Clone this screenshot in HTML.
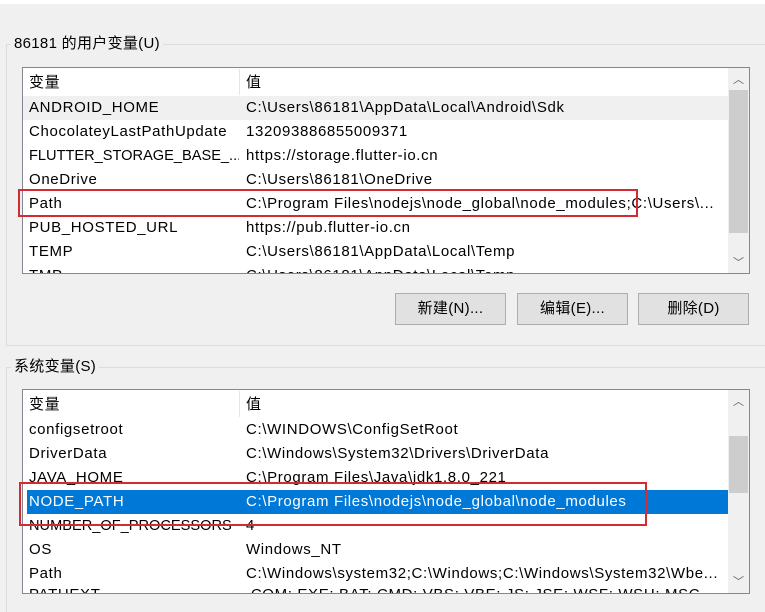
<!DOCTYPE html>
<html><head><meta charset="utf-8"><style>
*{margin:0;padding:0;box-sizing:border-box}
html,body{width:765px;height:612px;overflow:hidden}
body{background:#f0f0f0;position:relative;font-family:"Liberation Sans","Noto Sans CJK SC",sans-serif;font-size:15px;letter-spacing:0.65px;color:#000}
.abs{position:absolute}
.grp{position:absolute;border:1px solid #dcdcdc;border-right:none}
.lbl{position:absolute;background:#f0f0f0;padding:0 3px;line-height:18px;letter-spacing:0.3px}
.list{position:absolute;background:#fff;border:1px solid #828790;overflow:hidden}
.row{position:absolute;left:0;height:24px;line-height:24px;width:705px;white-space:nowrap;overflow:hidden}
.row span{position:absolute}
.c1{left:6px;width:210px;overflow:hidden}.c2{left:223px}
.sb{position:absolute;right:0;top:0;bottom:0;width:21px;background:#f0f0f0}
.thumb{position:absolute;left:1px;width:19px;background:#cdcdcd}
.arr{position:absolute;left:0;width:21px;text-align:center;font-size:11px;color:#606060;letter-spacing:0}
.btn{position:absolute;height:32px;top:293px;background:#e1e1e1;border:1px solid #adadad;text-align:center;line-height:30px;letter-spacing:0.3px}
.red{position:absolute;border:2px solid #d42a32}
</style></head><body>
<div class="abs" style="left:0;top:0;width:765px;height:4px;background:#fff"></div>
<div class="grp" style="left:6px;top:44px;width:770px;height:302px"></div>
<div class="lbl" style="left:11px;top:35px">86181 的用户变量(U)</div>
<div class="list" style="left:22px;top:67px;width:728px;height:207px">
 <div class="row" style="top:1px;height:28px;line-height:28px"><span class="c1">变量</span><span class="c2">值</span></div>
 <div class="abs" style="left:216px;top:1px;width:1px;height:26px;background:#e5e5e5"></div>
 <div class="row" style="top:28px;background:#f0f0f0"><span class="c1">ANDROID_HOME</span><span class="c2">C:\Users\86181\AppData\Local\Android\Sdk</span></div>
 <div class="row" style="top:52px"><span class="c1">ChocolateyLastPathUpdate</span><span class="c2">132093886855009371</span></div>
 <div class="row" style="top:76px"><span class="c1" style="letter-spacing:0;font-size:14.6px">FLUTTER_STORAGE_BASE_...</span><span class="c2">https://storage.flutter-io.cn</span></div>
 <div class="row" style="top:100px"><span class="c1">OneDrive</span><span class="c2">C:\Users\86181\OneDrive</span></div>
 <div class="row" style="top:124px"><span class="c1">Path</span><span class="c2">C:\Program Files\nodejs\node_global\node_modules;C:\Users\...</span></div>
 <div class="row" style="top:148px"><span class="c1">PUB_HOSTED_URL</span><span class="c2">https://pub.flutter-io.cn</span></div>
 <div class="row" style="top:172px"><span class="c1">TEMP</span><span class="c2">C:\Users\86181\AppData\Local\Temp</span></div>
 <div class="row" style="top:196px"><span class="c1">TMP</span><span class="c2">C:\Users\86181\AppData\Local\Temp</span></div>
 <div class="sb"><div class="arr" style="top:3px">︿</div><div class="thumb" style="top:22px;height:143px"></div><div class="arr" style="top:186px">﹀</div></div>
</div>
<div class="red" style="left:18px;top:189px;width:620px;height:28px"></div>
<div class="btn" style="left:395px;width:111px">新建(N)...</div>
<div class="btn" style="left:517px;width:111px">编辑(E)...</div>
<div class="btn" style="left:638px;width:111px">删除(D)</div>

<div class="grp" style="left:6px;top:367px;width:770px;height:260px"></div>
<div class="lbl" style="left:11px;top:358px">系统变量(S)</div>
<div class="list" style="left:22px;top:389px;width:728px;height:205px">
 <div class="row" style="top:1px;height:28px;line-height:28px"><span class="c1">变量</span><span class="c2">值</span></div>
 <div class="abs" style="left:216px;top:1px;width:1px;height:26px;background:#e5e5e5"></div>
 <div class="row" style="top:28px"><span class="c1">configsetroot</span><span class="c2">C:\WINDOWS\ConfigSetRoot</span></div>
 <div class="row" style="top:52px"><span class="c1">DriverData</span><span class="c2">C:\Windows\System32\Drivers\DriverData</span></div>
 <div class="row" style="top:76px"><span class="c1">JAVA_HOME</span><span class="c2">C:\Program Files\Java\jdk1.8.0_221</span></div>
 <div class="row" style="top:100px;left:4px;width:701px;background:#0078d7;color:#fff"><span style="left:2px">NODE_PATH</span><span style="left:219px">C:\Program Files\nodejs\node_global\node_modules</span></div>
 <div class="row" style="top:124px"><span class="c1" style="letter-spacing:0;font-size:14.6px">NUMBER_OF_PROCESSORS</span><span class="c2">4</span></div>
 <div class="row" style="top:148px"><span class="c1">OS</span><span class="c2">Windows_NT</span></div>
 <div class="row" style="top:172px"><span class="c1">Path</span><span class="c2">C:\Windows\system32;C:\Windows;C:\Windows\System32\Wbe...</span></div>
 <div class="row" style="top:193px"><span class="c1">PATHEXT</span><span class="c2">.COM;.EXE;.BAT;.CMD;.VBS;.VBE;.JS;.JSE;.WSF;.WSH;.MSC</span></div>
 <div class="sb"><div class="arr" style="top:3px">︿</div><div class="thumb" style="top:46px;height:57px"></div><div class="arr" style="top:183px">﹀</div></div>
</div>
<div class="red" style="left:19px;top:482px;width:628px;height:44px"></div>
</body></html>
